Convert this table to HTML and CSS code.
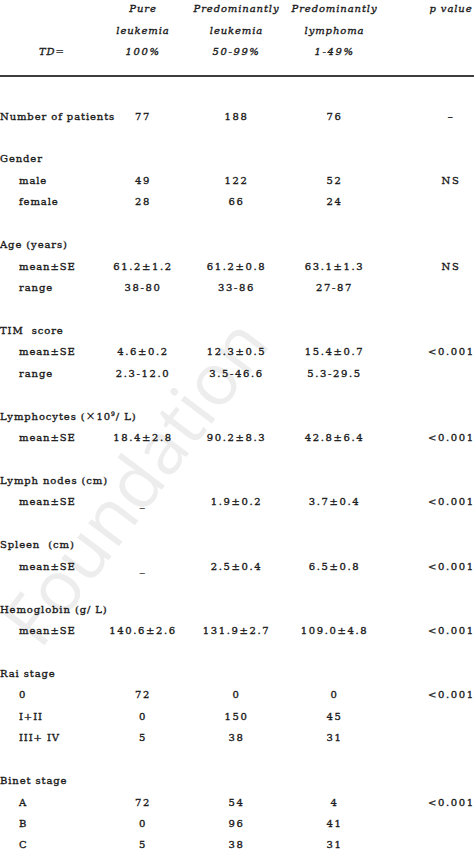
FILE: index.html
```html
<!DOCTYPE html>
<html>
<head>
<meta charset="utf-8">
<link rel="stylesheet" href="styles.css">
</head>
<body>
<div class="page">
  <div class="watermark">Foundation</div>
  <div class="table">
    <div class="row head">
      <span class="lab"></span><span class="c2">Pure</span><span class="c3">Predominantly</span><span class="c4">Predominantly</span><span class="p">p value</span>
    </div>
    <div class="row head">
      <span class="lab"></span><span class="c2">leukemia</span><span class="c3">leukemia</span><span class="c4">lymphoma</span>
    </div>
    <div class="row head nums">
      <span class="lab td">TD=</span><span class="c2">100%</span><span class="c3">50-99%</span><span class="c4">1-49%</span>
    </div>
    <div class="rule"><div class="line"></div></div>

    <div class="row"><span class="lab">Number of patients</span><span class="c2">77</span><span class="c3">188</span><span class="c4">76</span><span class="p">–</span></div>
    <div class="gap"></div>

    <div class="row"><span class="lab">Gender</span></div>
    <div class="row"><span class="lab sub">male</span><span class="c2">49</span><span class="c3">122</span><span class="c4">52</span><span class="p">NS</span></div>
    <div class="row"><span class="lab sub">female</span><span class="c2">28</span><span class="c3">66</span><span class="c4">24</span></div>
    <div class="gap"></div>

    <div class="row"><span class="lab">Age (years)</span></div>
    <div class="row"><span class="lab sub">mean±SE</span><span class="c2">61.2±1.2</span><span class="c3">61.2±0.8</span><span class="c4">63.1±1.3</span><span class="p">NS</span></div>
    <div class="row"><span class="lab sub">range</span><span class="c2">38-80</span><span class="c3">33-86</span><span class="c4">27-87</span></div>
    <div class="gap"></div>

    <div class="row"><span class="lab">TIM&nbsp; score</span></div>
    <div class="row"><span class="lab sub">mean±SE</span><span class="c2">4.6±0.2</span><span class="c3">12.3±0.5</span><span class="c4">15.4±0.7</span><span class="p">&lt;0.001</span></div>
    <div class="row"><span class="lab sub">range</span><span class="c2">2.3-12.0</span><span class="c3">3.5-46.6</span><span class="c4">5.3-29.5</span></div>
    <div class="gap"></div>

    <div class="row"><span class="lab">Lymphocytes (<span class="times">×</span>10<sup>9</sup>/ L)</span></div>
    <div class="row"><span class="lab sub">mean±SE</span><span class="c2">18.4±2.8</span><span class="c3">90.2±8.3</span><span class="c4">42.8±6.4</span><span class="p">&lt;0.001</span></div>
    <div class="gap"></div>

    <div class="row"><span class="lab">Lymph nodes (cm)</span></div>
    <div class="row"><span class="lab sub">mean±SE</span><span class="c2 low">_</span><span class="c3">1.9±0.2</span><span class="c4">3.7±0.4</span><span class="p">&lt;0.001</span></div>
    <div class="gap"></div>

    <div class="row"><span class="lab">Spleen&nbsp; (cm)</span></div>
    <div class="row"><span class="lab sub">mean±SE</span><span class="c2 low">_</span><span class="c3">2.5±0.4</span><span class="c4">6.5±0.8</span><span class="p">&lt;0.001</span></div>
    <div class="gap"></div>

    <div class="row"><span class="lab">Hemoglobin (g/ L)</span></div>
    <div class="row"><span class="lab sub">mean±SE</span><span class="c2">140.6±2.6</span><span class="c3">131.9±2.7</span><span class="c4">109.0±4.8</span><span class="p">&lt;0.001</span></div>
    <div class="gap"></div>

    <div class="row"><span class="lab">Rai stage</span></div>
    <div class="row"><span class="lab sub">0</span><span class="c2">72</span><span class="c3">0</span><span class="c4">0</span><span class="p">&lt;0.001</span></div>
    <div class="row"><span class="lab sub">I+II</span><span class="c2">0</span><span class="c3">150</span><span class="c4">45</span></div>
    <div class="row"><span class="lab sub">III+ IV</span><span class="c2">5</span><span class="c3">38</span><span class="c4">31</span></div>
    <div class="gap"></div>

    <div class="row"><span class="lab">Binet stage</span></div>
    <div class="row"><span class="lab sub">A</span><span class="c2">72</span><span class="c3">54</span><span class="c4">4</span><span class="p">&lt;0.001</span></div>
    <div class="row"><span class="lab sub">B</span><span class="c2">0</span><span class="c3">96</span><span class="c4">41</span></div>
    <div class="row"><span class="lab sub">C</span><span class="c2">5</span><span class="c3">38</span><span class="c4">31</span></div>
  </div>
</div>
</body>
</html>
```

FILE: styles.css
```css
html, body {
  margin: 0;
  padding: 0;
  background: #ffffff;
}

.page {
  position: relative;
  width: 474px;
  height: 850px;
  overflow: hidden;
  font-family: "DejaVu Serif", "Liberation Serif", serif;
  font-size: 10px;
  color: #1a1a1a;
  letter-spacing: 0.9px;
  -webkit-text-stroke: 0.35px #1a1a1a;
}

.watermark {
  position: absolute;
  left: 18px;
  top: 585px;
  font-family: "Open Sans", "DejaVu Sans", sans-serif;
  font-size: 72px;
  letter-spacing: 0;
  color: #ededed;
  -webkit-text-stroke: 0;
  white-space: nowrap;
  transform-origin: 0 50%;
  transform: rotate(-53deg);
  z-index: 0;
}

.table {
  position: relative;
  z-index: 1;
  margin-top: -1.7px;
}

.row {
  display: grid;
  grid-template-columns: 97px 92px 95px 101px 43px 46px;
  height: 21.45px;
  line-height: 21.45px;
  white-space: nowrap;
}

.row > span {
  text-align: center;
  white-space: nowrap;
}

.row:not(.head) > span:not(.lab),
.nums > span:not(.lab) {
  letter-spacing: 1.6px;
}

.row:not(.head) > .p {
  letter-spacing: 0.9px;
}

.row > .lab {
  grid-column: 1;
  text-align: left;
  overflow: visible;
}

.row > .sub {
  padding-left: 19px;
}

.row > .td {
  padding-left: 39px;
  font-style: italic;
}

.c2 { grid-column: 2; }
.c3 { grid-column: 3; }
.c4 { grid-column: 4; }
.row > .p { grid-column: 6; }

.head {
  font-style: italic;
}

.gap {
  height: 21.45px;
}

.rule {
  height: 42.9px;
  padding-top: 12.4px;
  box-sizing: border-box;
}

.line {
  height: 2px;
  background: #3e3e3e;
}

.times {
  font-family: "DejaVu Sans", sans-serif;
  font-size: 12px;
  -webkit-text-stroke: 0;
}

sup {
  font-size: 6px;
  line-height: 0;
  vertical-align: 4px;
}

.low {
  position: relative;
  top: 1px;
}
```
